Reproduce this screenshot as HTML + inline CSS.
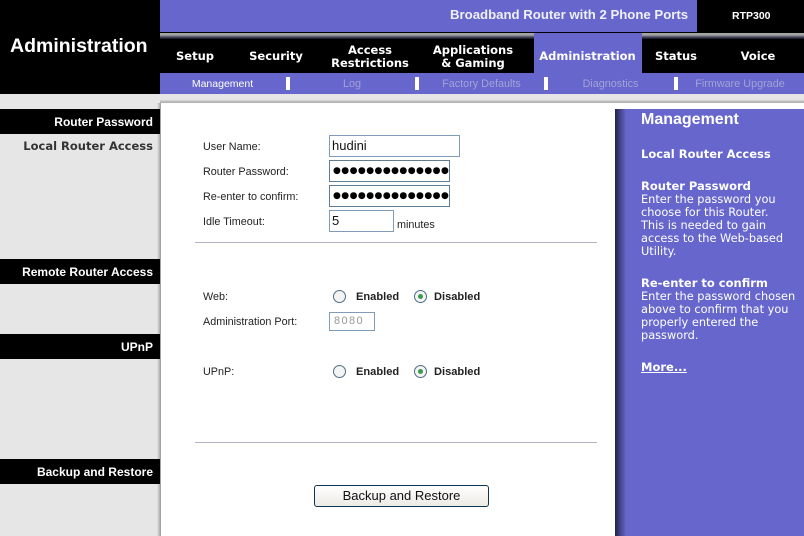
<!DOCTYPE html>
<html><head><meta charset="utf-8">
<style>
html,body{margin:0;padding:0;background:#e6e6e6}
body{width:804px;height:536px;position:relative;overflow:hidden;font-family:"Liberation Sans",Arial,sans-serif}
.a{position:absolute;white-space:nowrap}
.nav{position:absolute;top:38px;height:35px;color:#fff;font:bold 11.5px/13px "DejaVu Sans",sans-serif;text-align:center;display:flex;align-items:center;justify-content:center;padding-top:1px;box-sizing:border-box}
.two{padding-top:3px}
.sub{position:absolute;top:73px;height:21px;line-height:22px;font-size:10.8px;color:#a3a3d8;text-align:center;white-space:nowrap}
.sep{position:absolute;top:77px;width:4px;height:13px;background:#fff}
.bar{position:absolute;left:0;width:160px;height:25px;background:#000;color:#fff;font:bold 12px/26px "Liberation Sans",sans-serif;text-align:right;box-sizing:border-box;padding-right:7px}
.lb{position:absolute;left:203px;font-size:10.8px;line-height:13px;color:#222;white-space:nowrap}
.in{position:absolute;left:329px;box-sizing:border-box;border:1px solid #7f9db9;background:#fff;height:22px;font-size:13px;line-height:20px;padding-left:2px;color:#111;overflow:hidden;white-space:nowrap}
.dots{font:9px/20px "DejaVu Sans",sans-serif;letter-spacing:.45px;padding-left:3px;color:#000;border-color:#5f7d95}
.r{position:absolute;width:11px;height:11px;border:1px solid #4d6d85;border-radius:50%;background:#f4f4f4;box-sizing:content-box}
.r i{position:absolute;left:3px;top:3px;width:5px;height:5px;border-radius:50%;background:#3c9a4a}
.rl{position:absolute;font:bold 11.1px/13px "Liberation Sans",sans-serif;color:#222;white-space:nowrap}
.hr{position:absolute;left:195px;width:402px;height:1px;background:#b3b3c4}
.h{position:absolute;left:641px;color:#fff;font:11.35px/13px "DejaVu Sans",sans-serif;white-space:nowrap}
.h b{font-weight:bold;font-size:11.5px}
</style></head><body>

<div class="a" style="left:0;top:0;width:160px;height:94px;background:#000"></div>
<div class="a" style="left:10px;top:34px;color:#fff;font:bold 19.5px/24px 'Liberation Sans',sans-serif">Administration</div>

<div class="a" style="left:160px;top:0;width:537px;height:32px;background:#6666cc"></div>
<div class="a" style="left:697px;top:0;width:107px;height:32px;background:#000"></div>
<div class="a" style="left:450px;top:7px;font:bold 13.2px/16px 'Liberation Sans',sans-serif;color:#f0f0f8">Broadband Router with 2 Phone Ports</div>
<div class="a" style="left:732px;top:9px;color:#fff;font:bold 10.5px/14px 'Liberation Sans',sans-serif">RTP300</div>

<div class="a" style="left:160px;top:32px;width:644px;height:1px;background:#000"></div>
<div class="a" style="left:160px;top:33px;width:644px;height:6px;background:linear-gradient(#a8a8a8 0,#a0a0a0 35%,#5a5a70 60%,#101020 100%)"></div>
<div class="a" style="left:160px;top:39px;width:644px;height:34px;background:#000"></div>
<div class="a" style="left:534px;top:33px;width:108px;height:40px;background:#6666cc"></div>

<div class="nav" style="left:160px;width:70px">Setup</div>
<div class="nav" style="left:236px;width:80px">Security</div>
<div class="nav two" style="left:320px;width:100px">Access<br>Restrictions</div>
<div class="nav two" style="left:424px;width:98px">Applications<br>&amp; Gaming</div>
<div class="nav" style="left:534px;width:107px">Administration</div>
<div class="nav" style="left:642px;width:68px">Status</div>
<div class="nav" style="left:723px;width:70px">Voice</div>

<div class="a" style="left:160px;top:73px;width:644px;height:21px;background:#6666cc"></div>
<div class="sub" style="left:160px;width:125px;color:#fff;font-size:10.5px">Management</div>
<div class="sep" style="left:286px"></div>
<div class="sub" style="left:290px;width:124px">Log</div>
<div class="sep" style="left:415px"></div>
<div class="sub" style="left:419px;width:125px">Factory Defaults</div>
<div class="sep" style="left:544px"></div>
<div class="sub" style="left:548px;width:125px">Diagnostics</div>
<div class="sep" style="left:674px"></div>
<div class="sub" style="left:678px;width:124px">Firmware Upgrade</div>

<div class="a" style="left:160px;top:100px;width:644px;height:3px;background:linear-gradient(#d8d8d8,#a8a8a8)"></div>
<div class="a" style="left:157px;top:103px;width:4px;height:433px;background:linear-gradient(90deg,#e6e6e6,#9a9a9a)"></div>
<div class="a" style="left:161px;top:103px;width:454px;height:433px;background:#fff"></div>
<div class="a" style="left:615px;top:103px;width:189px;height:6px;background:#fff"></div>

<div class="bar" style="top:109px;">Router Password</div>
<div class="a" style="right:651px;top:140px;color:#333;font:bold 11.5px/13px 'DejaVu Sans',sans-serif">Local Router Access</div>
<div class="bar" style="top:259px">Remote Router Access</div>
<div class="bar" style="top:334px">UPnP</div>
<div class="bar" style="top:459px">Backup and Restore</div>

<div class="lb" style="top:141px">User Name:</div>
<div class="in" style="top:135px;width:131px">hudini</div>
<div class="lb" style="top:166px">Router Password:</div>
<div class="in dots" style="top:160px;width:121px">●●●●●●●●●●●●●●●●●</div>
<div class="lb" style="top:191px">Re-enter to confirm:</div>
<div class="in dots" style="top:185px;width:121px">●●●●●●●●●●●●●●●●●</div>
<div class="lb" style="top:216px">Idle Timeout:</div>
<div class="in" style="top:210px;width:65px">5</div>
<div class="lb" style="left:397px;top:219px">minutes</div>
<div class="hr" style="top:242px"></div>

<div class="lb" style="top:291px">Web:</div>
<div class="r" style="left:333px;top:290px"></div>
<div class="rl" style="left:356px;top:291px">Enabled</div>
<div class="r" style="left:414px;top:290px"><i></i></div>
<div class="rl" style="left:434px;top:291px">Disabled</div>
<div class="lb" style="top:316px">Administration Port:</div>
<div class="in" style="top:312px;width:46px;height:19px;line-height:17px;color:#999;letter-spacing:1.4px;font-size:11px;padding-left:4px">8080</div>

<div class="lb" style="top:366px">UPnP:</div>
<div class="r" style="left:333px;top:365px"></div>
<div class="rl" style="left:356px;top:366px">Enabled</div>
<div class="r" style="left:414px;top:365px"><i></i></div>
<div class="rl" style="left:434px;top:366px">Disabled</div>

<div class="hr" style="top:442px"></div>
<div class="a" style="left:314px;top:485px;width:175px;height:22px;box-sizing:border-box;border:1px solid #0f3350;border-radius:3px;background:linear-gradient(#fff,#ecebe5);text-align:center;font-size:13px;line-height:19px;color:#111">Backup and Restore</div>

<div class="a" style="left:615px;top:109px;width:189px;height:427px;background:#6666cc"></div>
<div class="a" style="left:615px;top:109px;width:11px;height:427px;background:linear-gradient(90deg,#23234a,#3b3b78 35%,#6666cc)"></div>
<div class="a" style="left:641px;top:110px;color:#fff;font:bold 16px/19px 'Liberation Sans',sans-serif">Management</div>
<div class="h" style="top:148px"><b>Local Router Access</b></div>
<div class="h" style="top:180px"><b>Router Password</b><br>Enter the password you<br>choose for this Router.<br>This is needed to gain<br>access to the Web-based<br>Utility.</div>
<div class="h" style="top:277px"><b>Re-enter to confirm</b><br>Enter the password chosen<br>above to confirm that you<br>properly entered the<br>password.</div>
<div class="h" style="top:361px"><b style="text-decoration:underline">More...</b></div>

</body></html>
